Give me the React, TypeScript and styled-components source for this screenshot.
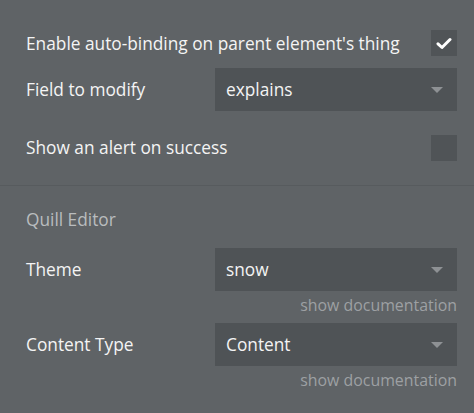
import * as React from "react";
import styled, { createGlobalStyle } from "styled-components";

const GlobalStyle = createGlobalStyle`
  html, body {
    margin: 0;
    padding: 0;
    background: #5f6366;
  }
  body {
    font-family: "Open Sans", "Liberation Sans", sans-serif;
  }
`;

const Panel = styled.div`
  width: 474px;
  height: 413px;
  background: #5f6366;
  color: #f2f2f2;
  box-sizing: border-box;
  overflow: hidden;
`;

const Section = styled.div<{ divider?: boolean }>`
  display: flex;
  flex-direction: column;
  padding: 0 17px 0 26px;
  border-bottom: ${({ divider }) => (divider ? "1px solid #575b5e" : "none")};
`;

const Row = styled.div<{ h: number }>`
  display: flex;
  align-items: center;
  justify-content: space-between;
  height: ${({ h }) => h}px;
`;

const Label = styled.div`
  font-size: 17.3px;
  color: #f4f4f4;
  white-space: nowrap;
`;

const Heading = styled.div`
  font-size: 17.3px;
  color: #b9bcbe;
  height: 62px;
  display: flex;
  align-items: center;
  padding-top: 4px;
  box-sizing: border-box;
`;

const Check = styled.div`
  width: 26px;
  height: 26px;
  background: #505457;
  display: flex;
  align-items: center;
  justify-content: center;
`;

const Select = styled.div`
  width: 242px;
  height: 43px;
  background: #4f5356;
  display: flex;
  align-items: center;
  justify-content: space-between;
  padding: 0 14px 0 11px;
  box-sizing: border-box;
  font-size: 17.3px;
  color: #f4f4f4;
`;

const Caret = styled.div`
  width: 0;
  height: 0;
  border-left: 6px solid transparent;
  border-right: 6px solid transparent;
  border-top: 6px solid #8e9194;
`;

const Field = styled.div`
  display: flex;
  flex-direction: column;
`;

const DocLink = styled.div`
  align-self: flex-end;
  font-size: 15.9px;
  color: #9da0a3;
  height: 32px;
  line-height: 28px;
`;

const Tick = () => (
  <svg width="16" height="13" viewBox="0 0 16 13">
    <path d="M2 6.8 L6 10.5 L14 2.5" fill="none" stroke="#ffffff" strokeWidth="3" strokeLinecap="round" strokeLinejoin="round" />
  </svg>
);

const Dropdown = ({ value }: { value: string }) => (
  <Select>
    <span>{value}</span>
    <Caret />
  </Select>
);

export default function App() {
  return (
    <Panel>
      <GlobalStyle />
      <Section divider>
        <Row h={28} />
        <Row h={30}>
          <Label>Enable auto-binding on parent element's thing</Label>
          <Check>
            <Tick />
          </Check>
        </Row>
        <Row h={63}>
          <Label>Field to modify</Label>
          <Dropdown value="explains" />
        </Row>
        <Row h={53}>
          <Label>Show an alert on success</Label>
          <Check />
        </Row>
        <Row h={11} />
      </Section>
      <Section>
        <Heading>Quill Editor</Heading>
        <Field>
          <Row h={43}>
            <Label>Theme</Label>
            <Dropdown value="snow" />
          </Row>
          <DocLink>show documentation</DocLink>
        </Field>
        <Field>
          <Row h={43}>
            <Label>Content Type</Label>
            <Dropdown value="Content" />
          </Row>
          <DocLink>show documentation</DocLink>
        </Field>
      </Section>
    </Panel>
  );
}
